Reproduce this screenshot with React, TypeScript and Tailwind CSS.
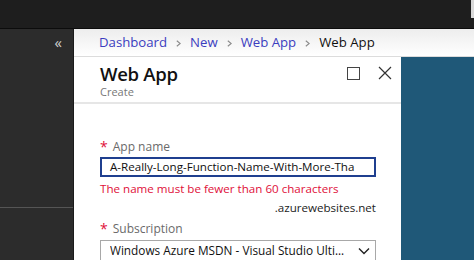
import React from "react";

function Chev() {
  return (
    <svg width="5" height="7" viewBox="0 0 5 7" className="mx-[9px] mt-[2px] shrink-0">
      <path d="M0.8 0.8 L4.2 3.5 L0.8 6.2" stroke="#8a8a8a" strokeWidth="1.1" fill="none" />
    </svg>
  );
}

export default function App() {
  const font = { fontFamily: '"Open Sans", "Noto Sans", sans-serif' };
  return (
    <div className="w-[474px] h-[260px] overflow-hidden flex flex-col bg-[#2b2b2b]" style={font}>
      <div className="h-[29px] shrink-0 bg-[#1e1e1e] border-b border-b-[#0c0c0c] relative">
        <div className="absolute right-0 top-0 w-[3px] h-[18px] bg-[#d8d8d8]" />
      </div>
      <div className="flex flex-1 min-h-0">
        <div className="w-[74px] shrink-0 bg-[#2c2c2c] border-r border-r-[#1a1a1a] flex flex-col">
          <div className="h-[26px] flex items-center justify-end pr-[11px] text-[#d0d0d0] text-[15px] leading-none">«</div>
          <div className="mt-[152px] h-px bg-[#555555]" />
        </div>
        <div className="flex-1 flex flex-col min-w-0">
          <div className="h-[28px] shrink-0 bg-gradient-to-b from-[#ededed] to-[#ffffff] border-b border-b-[#dcdcdc] flex items-center pl-[25px] text-[13.2px] whitespace-nowrap">
            <span className="text-[#3b3dbf]">Dashboard</span>
            <Chev />
            <span className="text-[#3b3dbf]">New</span>
            <Chev />
            <span className="text-[#3b3dbf]">Web App</span>
            <Chev />
            <span className="text-[#111]">Web App</span>
          </div>
          <div className="flex flex-1 min-h-0">
            <div className="w-[327px] shrink-0 bg-white flex flex-col">
              <div className="h-[47px] shrink-0 border-b-2 border-b-[#e6e6e6] flex pl-[26px] pr-[9px]">
                <div className="flex-1 pt-[6px]">
                  <div className="text-[18.5px] leading-[22px] font-semibold text-[#111] tracking-[-0.3px]">Web App</div>
                  <div className="text-[11px] leading-[13px] text-[#777]">Create</div>
                </div>
                <div className="flex items-start pt-[10px] gap-[18px]">
                  <div className="w-[13px] h-[13px] border border-[#444]" />
                  <svg width="14" height="14" viewBox="0 0 14 14" className="mt-[-1px]">
                    <path d="M1 1 L13 13 M13 1 L1 13" stroke="#333" strokeWidth="1.2" />
                  </svg>
                </div>
              </div>
              <div className="pl-[26px] pr-[25px] pt-[35px] flex flex-col">
                <div className="flex items-center text-[12px] leading-[16px]">
                  <span className="text-[#e0103a] text-[14px] mr-[5px]">*</span>
                  <span className="text-[#6a6a6a]">App name</span>
                </div>
                <div className="mt-[2px] h-[20px] border-2 border-[#1f3f8f] flex items-center pl-[8px] text-[11.6px] text-[#111] whitespace-nowrap overflow-hidden">
                  A-Really-Long-Function-Name-With-More-Tha
                </div>
                <div className="mt-[4px] text-[11.6px] leading-[16px] text-[#e0103a] whitespace-nowrap">The name must be fewer than 60 characters</div>
                <div className="mt-[3px] text-[11.6px] leading-[16px] text-[#222] text-right">.azurewebsites.net</div>
                <div className="mt-[5px] flex items-center text-[12px] leading-[16px]">
                  <span className="text-[#e0103a] text-[14px] mr-[5px]">*</span>
                  <span className="text-[#6a6a6a]">Subscription</span>
                </div>
                <div className="mt-[3px] h-[22px] shrink-0 border border-[#a8a8a8] flex items-center pl-[9px] pr-[5px] text-[11.8px] text-[#111] whitespace-nowrap">
                  <span className="flex-1 overflow-hidden">Windows Azure MSDN - Visual Studio Ulti...</span>
                  <svg width="12" height="8" viewBox="0 0 12 8">
                    <path d="M1 1.5 L6 6.5 L11 1.5" stroke="#222" strokeWidth="1.4" fill="none" />
                  </svg>
                </div>
              </div>
            </div>
            <div className="flex-1 bg-[#1f5878]" />
          </div>
        </div>
      </div>
    </div>
  );
}
